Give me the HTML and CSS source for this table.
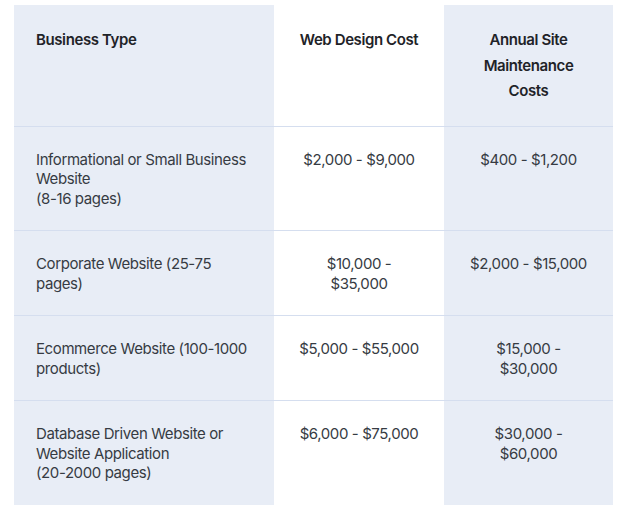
FILE: index.html
```html
<!DOCTYPE html>
<html lang="en">
<head>
<meta charset="utf-8">
<title>Web Design Costs</title>
<link rel="stylesheet" href="styles.css">
</head>
<body>
<table class="costs">
  <colgroup>
    <col class="col-type">
    <col class="col-design">
    <col class="col-maint">
  </colgroup>
  <thead>
    <tr>
      <th class="shaded left">Business Type</th>
      <th>Web Design Cost</th>
      <th class="shaded">Annual Site Maintenance Costs</th>
    </tr>
  </thead>
  <tbody>
    <tr>
      <td class="shaded left">Informational or Small Business Website<br>(8-16 pages)</td>
      <td>$2,000 - $9,000</td>
      <td class="shaded">$400 - $1,200</td>
    </tr>
    <tr>
      <td class="shaded left">Corporate Website (25-75 pages)</td>
      <td>$10,000 - $35,000</td>
      <td class="shaded">$2,000 - $15,000</td>
    </tr>
    <tr>
      <td class="shaded left">Ecommerce Website (100-1000 products)</td>
      <td>$5,000 - $55,000</td>
      <td class="shaded">$15,000 - $30,000</td>
    </tr>
    <tr>
      <td class="shaded left">Database Driven Website or Website Application<br>(20-2000 pages)</td>
      <td>$6,000 - $75,000</td>
      <td class="shaded">$30,000 - $60,000</td>
    </tr>
  </tbody>
</table>
</body>
</html>
```
FILE: styles.css
```css
html, body {
  margin: 0;
  padding: 0;
  background: #ffffff;
}

body {
  padding: 5px 0 0 14px;
  font-family: Inter, "Liberation Sans", sans-serif;
  font-size: 15px;
  letter-spacing: -0.4px;
  color: #363b43;
}

.costs {
  border-collapse: collapse;
  table-layout: fixed;
  width: 599px;
}

.col-type { width: 260px; }
.col-design { width: 170px; }
.col-maint { width: 169px; }

.costs th,
.costs td {
  vertical-align: top;
  text-align: center;
  padding-left: 24px;
  padding-right: 24px;
}

.costs th {
  font-weight: 600;
  color: #1f2328;
  line-height: 25.5px;
  padding-top: 22px;
  padding-bottom: 22px;
}

.costs td {
  line-height: 19.5px;
  padding-top: 23px;
  padding-bottom: 22px;
}

.costs .left {
  text-align: left;
  padding-left: 22px;
  padding-right: 22px;
}

.costs .shaded {
  background: #e8edf6;
}

.costs thead tr,
.costs tbody tr {
  border-bottom: 1px solid #d5deef;
}

.costs tbody tr:last-child {
  border-bottom: none;
}
```
